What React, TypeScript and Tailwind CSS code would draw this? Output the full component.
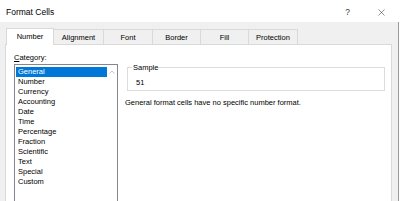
import { X } from 'lucide-react';

const tabs = [
  { label: 'Number', width: 'w-[48px]' },
  { label: 'Alignment', width: 'w-[50px]' },
  { label: 'Font', width: 'w-[49px]' },
  { label: 'Border', width: 'w-[48px]' },
  { label: 'Fill', width: 'w-[48px]' },
  { label: 'Protection', width: 'w-[49px]' },
];

const categories = [
  'General',
  'Number',
  'Currency',
  'Accounting',
  'Date',
  'Time',
  'Percentage',
  'Fraction',
  'Scientific',
  'Text',
  'Special',
  'Custom',
];

export default function App() {
  return (
    <div className="w-[400px] h-[201px] overflow-hidden bg-white text-black font-['Liberation_Sans',Arial,sans-serif] text-[7.5px] leading-none">
      {/* title bar */}
      <div className="h-[22px] flex items-center bg-white">
        <span className="pl-[6px] pt-[2px] text-[8.5px]">Format Cells</span>
        <span className="ml-auto mr-[26px] pt-[2px] text-[8.5px] text-[#333]">?</span>
        <X className="mr-[13px] mt-[2px] text-[#333]" size={11} strokeWidth={1.2} />
      </div>

      {/* body */}
      <div className="h-[179px] w-[399px] bg-[#f0f0f0] border-r border-[#9a9a9a] pl-[5px] pr-[6px] pt-[5px]">
        {/* tabs */}
        <div className="flex items-end h-[17px] pl-[1px] relative z-10">
          {tabs.map((t, i) =>
            i === 0 ? (
              <div
                key={t.label}
                className={`${t.width} h-[17px] -mb-px bg-white border border-b-0 border-[#d9d9d9] flex items-center justify-center`}
              >
                {t.label}
              </div>
            ) : (
              <div
                key={t.label}
                className={`${t.width} h-[15px] bg-[#f0f0f0] border border-l-0 border-b-0 border-[#d9d9d9] flex items-center justify-center pt-[1px]`}
              >
                {t.label}
              </div>
            ),
          )}
        </div>

        {/* panel */}
        <div className="h-[200px] bg-white border border-[#d9d9d9] flex pl-[8px] pt-[9px]">
          <div className="w-[104px] flex flex-col">
            <div className="h-[10px]">
              <span className="underline">C</span>ategory:
            </div>
            <div className="h-[150px] border border-[#828790] flex pt-[2px] pl-[1px]">
              <div className="flex-1 flex flex-col">
                {categories.map((c, i) => (
                  <div
                    key={c}
                    className={`h-[10px] flex items-center pl-[2px] ${i === 0 ? 'bg-[#0078d7] text-white' : ''}`}
                  >
                    {c}
                  </div>
                ))}
              </div>
              <div className="w-[10px] flex justify-center pt-[3px]">
                <svg width="6" height="4" viewBox="0 0 6 4" fill="none">
                  <path d="M0.5 3.5 L3 1 L5.5 3.5" stroke="#c0c0c0" strokeWidth="0.9" />
                </svg>
              </div>
            </div>
          </div>

          <div className="w-[258px] ml-[9px] flex flex-col">
            <fieldset className="h-[27px] border border-[#dcdcdc] px-[7px] mt-[10px]">
              <legend className="px-[1px] -ml-[3px]">Sample</legend>
              <div className="pt-[7px] pl-[1px]">51</div>
            </fieldset>
            <div className="mt-[8px] -ml-[2px]">General format cells have no specific number format.</div>
          </div>
        </div>
      </div>
    </div>
  );
}
